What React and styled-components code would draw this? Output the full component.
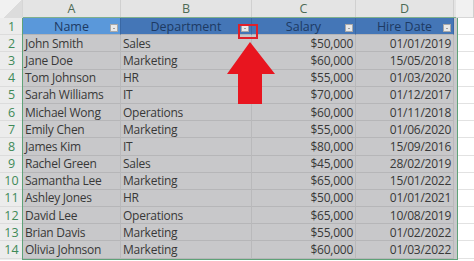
import React from "react"
import styled, { createGlobalStyle } from "styled-components"

const rows = [
  ["John Smith", "Sales", "$50,000", "01/01/2019"],
  ["Jane Doe", "Marketing", "$60,000", "15/05/2018"],
  ["Tom Johnson", "HR", "$55,000", "01/03/2020"],
  ["Sarah Williams", "IT", "$70,000", "01/12/2017"],
  ["Michael Wong", "Operations", "$60,000", "01/11/2018"],
  ["Emily Chen", "Marketing", "$55,000", "01/06/2020"],
  ["James Kim", "IT", "$80,000", "15/09/2016"],
  ["Rachel Green", "Sales", "$45,000", "28/02/2019"],
  ["Samantha Lee", "Marketing", "$65,000", "15/01/2022"],
  ["Ashley Jones", "HR", "$50,000", "01/01/2021"],
  ["David Lee", "Operations", "$65,000", "10/08/2019"],
  ["Brian Davis", "Marketing", "$55,000", "01/02/2022"],
  ["Olivia Johnson", "Marketing", "$60,000", "01/03/2022"],
]

const headers = ["Name", "Department", "Salary", "Hire Date"]
const letters = ["A", "B", "C", "D"]
const COLS = "98px 131px 104px 98px"
const ROW_H = "17.2px"

const GlobalStyle = createGlobalStyle`
  html, body {
    margin: 0;
    background: #ffffff;
    overflow: hidden;
  }
  body {
    font-family: "Open Sans", "Noto Sans", sans-serif;
  }
`

const App = () => {
  return (
    <>
      <GlobalStyle />
      <Sheet>
        <ColumnBar>
          <Corner />
          <Letters>
            {letters.map(l => (
              <Letter key={l}>{l}</Letter>
            ))}
          </Letters>
          <Letter $blank />
        </ColumnBar>
        <Body>
          <RowNumbers>
            {Array.from({ length: 14 }, (_, i) => (
              <RowNumber key={i}>{i + 1}</RowNumber>
            ))}
          </RowNumbers>
          <Selection>
            {headers.map((h, i) => (
              <HeadCell key={h} $active={i === 0}>
                {h}
                <Dropdown />
              </HeadCell>
            ))}
            {rows.map((r, ri) =>
              r.map((v, ci) => (
                <Cell key={ri + "-" + ci} $right={ci > 1}>
                  {v}
                </Cell>
              ))
            )}
          </Selection>
          <Blank>
            {Array.from({ length: 14 }, (_, i) => (
              <BlankCell key={i} />
            ))}
          </Blank>
        </Body>
        <Marker />
        <Arrow viewBox="0 0 48 62">
          <polygon points="23,0 48,32 35,32 35,62 11,62 11,32 0,32" fill="#e8151f" />
        </Arrow>
      </Sheet>
    </>
  )
}

export default App

const Sheet = styled.div`
  position: relative;
  width: 474px;
  height: 261px;
  overflow: hidden;
  background: #ffffff;
`

const ColumnBar = styled.div`
  display: flex;
  height: 18px;
  background: #f1f1f1;
`

const Corner = styled.div`
  width: 23px;
  flex-shrink: 0;
  background: linear-gradient(135deg, #f1f1f1 55%, #dcdcdc 55%);
  border-right: 1px solid #d6d6d6;
  box-sizing: border-box;
`

const Letters = styled.div`
  display: grid;
  grid-template-columns: ${COLS};
  border-bottom: 1px solid #7fb08d;
  box-sizing: border-box;
  width: 433px;
  background: #e4e4e4;
`

const Letter = styled.div`
  display: flex;
  align-items: center;
  justify-content: center;
  font-size: 12.5px;
  color: #4d6a55;
  border-right: 1px solid #d0d0d0;
  flex: ${props => (props.$blank ? "1" : "none")};
  border-bottom: ${props => (props.$blank ? "1px solid #d6d6d6" : "none")};
  box-sizing: border-box;
`

const Body = styled.div`
  display: flex;
`

const RowNumbers = styled.div`
  width: 23px;
  flex-shrink: 0;
  display: grid;
  grid-template-rows: repeat(14, ${ROW_H});
  background: #ececec;
`

const RowNumber = styled.div`
  display: flex;
  align-items: center;
  justify-content: center;
  font-size: 12.5px;
  color: #3f8a58;
  border-bottom: 1px solid #dcdcdc;
  box-sizing: border-box;
`

const Selection = styled.div`
  display: grid;
  grid-template-columns: ${COLS};
  grid-template-rows: repeat(14, ${ROW_H});
  border-left: 1.5px solid #5fa278;
  border-right: 1.5px solid #5fa278;
  border-bottom: 1.5px solid #5fa278;
  width: 434px;
  box-sizing: content-box;
  margin-left: -1px;
  background: #c8c8ca;
`

const HeadCell = styled.div`
  position: relative;
  display: flex;
  align-items: center;
  justify-content: center;
  font-size: 12.5px;
  color: #1d3a63;
  background: ${props => (props.$active ? "#5a98da" : "#4476b7")};
  border-right: 1px solid #3a68a4;
  border-bottom: 1px solid #b4b4b6;
  box-sizing: border-box;
`

const Dropdown = styled.span`
  position: absolute;
  right: 2px;
  bottom: 2px;
  width: 8px;
  height: 8px;
  background: #e9e9e9;
  border: 1px solid #a8a8a8;
  box-sizing: border-box;

  &::after {
    content: "";
    position: absolute;
    left: 2px;
    top: 3px;
    border-left: 1.5px solid transparent;
    border-right: 1.5px solid transparent;
    border-top: 1.5px solid #555;
  }
`

const Cell = styled.div`
  display: flex;
  align-items: center;
  justify-content: ${props => (props.$right ? "flex-end" : "flex-start")};
  padding: 0 2px;
  font-size: 12px;
  letter-spacing: -0.25px;
  color: #383838;
  white-space: nowrap;
  overflow: hidden;
  border-right: 1px solid #b9b9bb;
  border-bottom: 1px solid #b6b6b8;
  box-sizing: border-box;
`

const Blank = styled.div`
  flex: 1;
  display: grid;
  grid-template-rows: repeat(14, ${ROW_H});
`

const BlankCell = styled.div`
  border-bottom: 1px solid #e2e2e2;
  box-sizing: border-box;
`

const Marker = styled.div`
  position: absolute;
  left: 238px;
  top: 24px;
  width: 20px;
  height: 15px;
  border: 2px solid #e0202a;
  box-sizing: border-box;
`

const Arrow = styled.svg`
  position: absolute;
  left: 227px;
  top: 42px;
  width: 48px;
  height: 62px;
`
